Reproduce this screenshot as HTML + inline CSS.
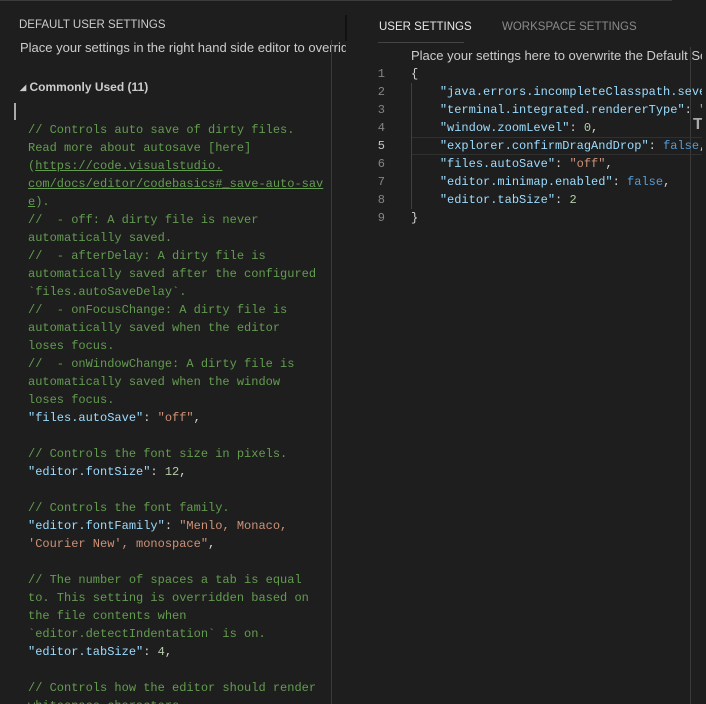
<!DOCTYPE html>
<html><head><meta charset="utf-8"><style>
*{margin:0;padding:0;box-sizing:border-box}
html{overflow:hidden;width:706px;height:704px}
body{width:706px;height:704px;background:#1e1e1e;overflow:hidden;position:relative;font-family:"Liberation Sans",sans-serif}
.mono{font-family:"Liberation Mono",monospace;font-size:12px;line-height:18px;white-space:pre}
.c{color:#639c50}.k{color:#9cdcfe}.s{color:#ce9178}.n{color:#b5cea8}.b{color:#569cd6}.p{color:#d4d4d4}
.u{text-decoration:underline}
.clip{position:absolute;overflow:hidden}
</style></head><body>
<div style="position:absolute;left:0;top:0;width:672px;height:1px;background:#3c3c3c"></div>
<div style="position:absolute;left:19px;top:19px;font-size:11.5px;color:#cccccc">DEFAULT USER SETTINGS</div>
<div style="position:absolute;left:20px;top:40px;font-size:13px;color:#cccccc;width:326px;overflow:hidden;white-space:nowrap">Place your settings in the right hand side editor to override.</div>
<div style="position:absolute;left:345px;top:15px;width:2px;height:26px;background:#111"></div>
<div style="position:absolute;left:331px;top:40px;width:1px;height:664px;background:#3a3a3a"></div>
<div style="position:absolute;left:20px;top:80px;font-size:12px;font-weight:bold;color:#cccccc"><span style="font-size:8px;position:relative;top:-1px">◢</span> Commonly Used (11)</div>
<div style="position:absolute;left:14px;top:103px;width:2px;height:17px;background:#aaa"></div>
<div class="clip" style="left:0;top:100px;width:331px;height:604px">
<div class="mono" style="position:absolute;left:28px;top:21px"><span class="c">// Controls auto save of dirty files.
Read more about autosave [here]
(<span class="u">https://code.visualstudio.</span>
<span class="u">com/docs/editor/codebasics#_save-auto-sav</span>
<span class="u">e</span>).
//  - off: A dirty file is never
automatically saved.
//  - afterDelay: A dirty file is
automatically saved after the configured
`files.autoSaveDelay`.
//  - onFocusChange: A dirty file is
automatically saved when the editor
loses focus.
//  - onWindowChange: A dirty file is
automatically saved when the window
loses focus.</span>
<span class="k">"files.autoSave"</span><span class="p">: </span><span class="s">"off"</span><span class="p">,</span>

<span class="c">// Controls the font size in pixels.</span>
<span class="k">"editor.fontSize"</span><span class="p">: </span><span class="n">12</span><span class="p">,</span>

<span class="c">// Controls the font family.</span>
<span class="k">"editor.fontFamily"</span><span class="p">: </span><span class="s">"Menlo, Monaco,
'Courier New', monospace"</span><span class="p">,</span>

<span class="c">// The number of spaces a tab is equal
to. This setting is overridden based on
the file contents when
`editor.detectIndentation` is on.</span>
<span class="k">"editor.tabSize"</span><span class="p">: </span><span class="n">4</span><span class="p">,</span>

<span class="c">// Controls how the editor should render
whitespace characters.</span></div></div>

<div style="position:absolute;left:379px;top:21px;font-size:11.5px;color:#e7e7e7">USER SETTINGS</div>
<div style="position:absolute;left:502px;top:21px;font-size:11.5px;color:#8a8a8a">WORKSPACE SETTINGS</div>
<div style="position:absolute;left:378px;top:42px;width:86px;height:1px;background:#444"></div>
<div class="clip" style="left:340px;top:40px;width:366px;height:664px">
<div style="position:absolute;left:71px;top:8px;font-size:13px;color:#cccccc;white-space:nowrap">Place your settings here to overwrite the Default Settings.</div>
<div style="position:absolute;left:350px;top:7px;width:1px;height:657px;background:#3a3a3a"></div>
<div style="position:absolute;left:71px;top:97px;width:295px;height:18px;border-top:1px solid #303030;border-bottom:1px solid #303030"></div>
<div style="position:absolute;left:71px;top:43px;width:1px;height:126px;background:#404040"></div>
<div class="mono" style="position:absolute;left:30px;top:25px;width:15px;text-align:right;color:#858585">1
2
3
4
<span style="color:#c6c6c6">5</span>
6
7
8
9</div>
<div class="mono" style="position:absolute;left:71px;top:25px"><span class="p">{</span>
    <span class="k">"java.errors.incompleteClasspath.severity"</span>
    <span class="k">"terminal.integrated.rendererType"</span><span class="p">: </span><span class="s">"dom"</span>
    <span class="k">"window.zoomLevel"</span><span class="p">: </span><span class="n">0</span><span class="p">,</span>
    <span class="k">"explorer.confirmDragAndDrop"</span><span class="p">: </span><span class="b">false</span><span class="p">,</span>
    <span class="k">"files.autoSave"</span><span class="p">: </span><span class="s">"off"</span><span class="p">,</span>
    <span class="k">"editor.minimap.enabled"</span><span class="p">: </span><span class="b">false</span><span class="p">,</span>
    <span class="k">"editor.tabSize"</span><span class="p">: </span><span class="n">2</span>
<span class="p">}</span></div>
<div style="position:absolute;left:353px;top:78px;width:9px;height:14px;color:#aaa;font-size:16px;font-weight:bold;line-height:14px;background:#1e1e1e">T</div>
<div style="position:absolute;left:362px;top:0;width:4px;height:664px;background:#1e1e1e"></div>
</div>
</body></html>
